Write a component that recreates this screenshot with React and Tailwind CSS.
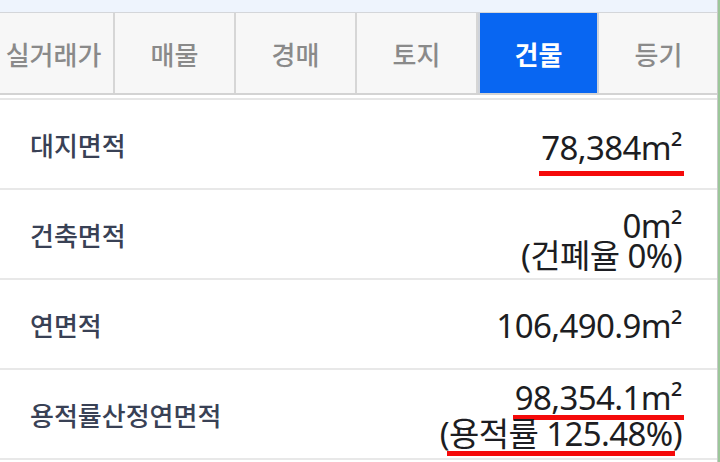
import React from "react";

const tabs = ["실거래가", "매물", "경매", "토지", "건물", "등기"];

const KR = '"Noto Sans CJK KR", sans-serif';

// 빨간 밑줄 표시
function Mark({ children, bottom }) {
  return (
    <span className="relative inline-block">
      {children}
      <span
        className="absolute left-[-2px] right-[-2px] h-[5px] bg-[#f50a0a]"
        style={{ bottom }}
      />
    </span>
  );
}

function Row({ label, children, valueClass = "" }) {
  return (
    <div className="h-[90px] flex items-center justify-between pl-[30px] pr-[35px] border-b-2 border-[#e8e8e8]">
      <span className="text-[26px] text-[#394155] font-medium" style={{ fontFamily: KR }}>
        {label}
      </span>
      <div
        className={`flex flex-col items-end text-[33px] leading-[30px] text-[#1c1d22] tracking-[-0.6px] ${valueClass}`}
      >
        {children}
      </div>
    </div>
  );
}

export default function App() {
  return (
    <div
      className="w-[720px] h-[462px] overflow-hidden bg-white flex"
      style={{ fontFamily: '"Noto Sans", "Noto Sans CJK KR", sans-serif' }}
    >
      <div className="w-[717px] flex flex-col">
        {/* 상단 여백 */}
        <div className="h-[13px] bg-[#eef4fd] border-b border-[#d4d6da]" />

        {/* 탭 */}
        <div className="h-[82px] flex ml-[-6px] bg-[#f7f7f7] border-b-2 border-[#d3d3d3]">
          {tabs.map((t) => {
            const active = t === "건물";
            return (
              <div
                key={t}
                className={
                  active
                    ? "w-[121px] shrink-0 flex items-center justify-center bg-[#0866f2] text-white font-bold text-[26px] border-x-2 border-[#cfd3da]"
                    : "w-[121px] shrink-0 flex items-center justify-center text-[#8a8a8a] font-medium text-[26px] border-r-2 border-[#d6d6d6]"
                }
                style={{ fontFamily: KR }}
              >
                {t}
              </div>
            );
          })}
        </div>

        {/* 목록 */}
        <div className="mt-[3px] border-t-2 border-[#e6e6e6] flex-1">
          <Row label="대지면적" valueClass="mt-[8px]">
            <Mark bottom="-13px">78,384m²</Mark>
          </Row>
          <Row label="건축면적" valueClass="mt-[14px]">
            <span>0m²</span>
            <span>(건폐율 0%)</span>
          </Row>
          <Row label="연면적" valueClass="mt-[4px]">
            <span>106,490.9m²</span>
          </Row>
          <Row label="용적률산정연면적" valueClass="mt-[4px]">
            <span className="pb-[6px]">
              <Mark bottom="-7px">98,354.1m²</Mark>
            </span>
            <span>
              (<Mark bottom="-7px">용적률 125.48%</Mark>)
            </span>
          </Row>
        </div>
      </div>
      <div className="flex-1 border-l border-[#c9c9c9] bg-[#9cc79a]" />
    </div>
  );
}
